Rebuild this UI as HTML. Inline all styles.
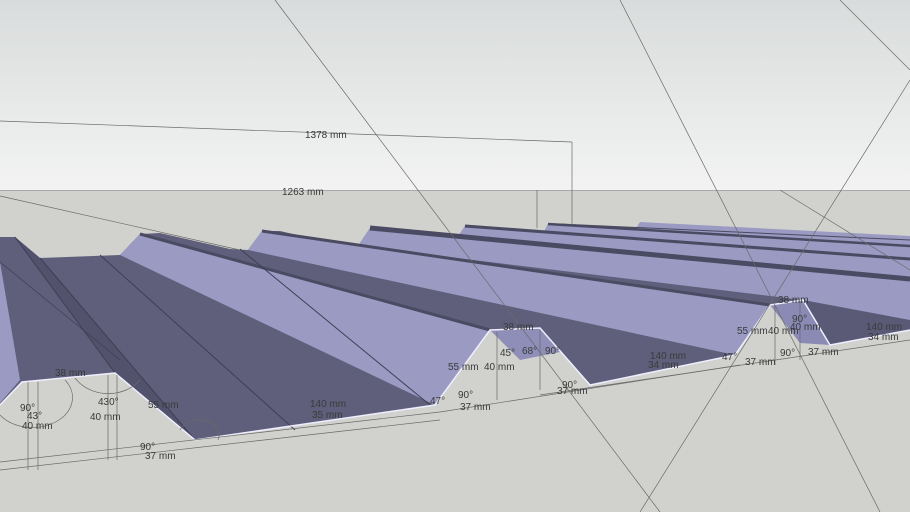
<!DOCTYPE html><html><head><style>html,body{margin:0;padding:0;width:910px;height:512px;overflow:hidden;background:#d0d0cc}svg{display:block}text{font-family:"Liberation Sans",sans-serif;font-size:10px;fill:#3a3a3a}</style></head><body>
<svg width="910" height="512" viewBox="0 0 910 512" xmlns="http://www.w3.org/2000/svg">
<defs><linearGradient id="sky" x1="0" y1="0" x2="0" y2="1"><stop offset="0" stop-color="#d9dcdc"/><stop offset="1" stop-color="#f3f3f3"/></linearGradient></defs>
<rect width="910" height="190" fill="url(#sky)"/>
<rect y="190" width="910" height="322" fill="#d1d1cd"/>
<line x1="0" y1="190.5" x2="910" y2="190.5" stroke="#a8a8a8" stroke-width="1"/>
<!-- base sheet (dark) -->
<polygon points="0,237 15,237 40,258 120,255 140,234 160,233 230,249 248,250 262,231 280,231 345,246 358,246 370,228 385,228 445,243 453,244 465,226 480,226 535,240 540,240 548,224 560,224 910,240 910,330 830,345 803,300 770,305 735,355 590,385 540,328 490,330 435,405 195,440 115,373 22,382 0,405" fill="#5f5f7b"/>
<!-- back ribs light faces -->
<polygon points="630,238 640,222 910,236 910,262" fill="#9a9ac3"/>
<polygon points="540,240 548,224 910,246 910,273" fill="#9a9ac3"/>
<line x1="548" y1="224" x2="910" y2="246" stroke="#4a4a62" stroke-width="2.5"/>
<polygon points="453,244 465,226 910,259 910,295" fill="#9a9ac3"/>
<line x1="465" y1="226" x2="910" y2="259" stroke="#4a4a62" stroke-width="3"/>
<polygon points="358,246 370,228 910,279 910,328 830,345 803,300" fill="#9a9ac3"/>
<line x1="370" y1="228" x2="910" y2="279" stroke="#4a4a62" stroke-width="5"/>
<polygon points="803,300 910,320 910,330 830,345" fill="#5a5a76"/>
<polygon points="248,250 262,231 770,305 735,355" fill="#9a9ac3"/>
<line x1="262" y1="231" x2="770" y2="305" stroke="#4a4a62" stroke-width="3"/>
<polygon points="770,305 803,300 830,345 800,343" fill="#8a8ab4"/>
<polygon points="120,255 140,234 490,330 435,405" fill="#9a9ac3"/>
<line x1="140" y1="234" x2="490" y2="330" stroke="#4a4a62" stroke-width="3"/>
<polygon points="490,330 540,328 560,352 520,360" fill="#8e8eb8"/>
<!-- rib A -->
<polygon points="0,262 20,380 0,403" fill="#9a9ac3"/>
<polygon points="15,237 40,258 195,440 115,373" fill="#52526c"/>
<line x1="15" y1="237" x2="115" y2="373" stroke="#3e3e55" stroke-width="1"/>
<line x1="40" y1="258" x2="195" y2="440" stroke="#3e3e55" stroke-width="1"/>
<line x1="100" y1="255" x2="295" y2="430" stroke="#3e3e55" stroke-width="1"/>
<line x1="240" y1="249" x2="430" y2="405" stroke="#3e3e55" stroke-width="1"/>
<line x1="0" y1="262" x2="120" y2="360" stroke="#3e3e55" stroke-width=".7"/>
<line x1="560" y1="224" x2="910" y2="240" stroke="#4a4a62" stroke-width="1"/>
<!-- front profile edges -->
<polyline points="0,405 22,382 115,373 195,440 435,405 490,330 540,328 590,385 735,355 770,305 803,300 830,345 910,330" fill="none" stroke="#eeeeff" stroke-width="1.5"/>
<!-- dimension lines -->
<g stroke="#6a6a6a" stroke-width=".7" fill="none">
<line x1="0" y1="121" x2="572" y2="142"/><line x1="572" y1="142" x2="572" y2="225"/>
<line x1="537" y1="190" x2="537" y2="228"/>
<line x1="0" y1="196" x2="240" y2="250"/>
<line x1="275" y1="0" x2="660" y2="512"/>
<line x1="620" y1="0" x2="880" y2="512"/>
<line x1="840" y1="0" x2="910" y2="70"/>
<line x1="910" y1="80" x2="640" y2="512"/>
<line x1="780" y1="190" x2="910" y2="270"/>
<line x1="0" y1="462" x2="440" y2="412"/><line x1="0" y1="470" x2="440" y2="420"/>
<line x1="440" y1="412" x2="740" y2="365"/>
<line x1="540" y1="395" x2="910" y2="340"/>
<line x1="28" y1="382" x2="28" y2="470"/><line x1="38" y1="382" x2="38" y2="470"/>
<line x1="108" y1="375" x2="108" y2="460"/><line x1="117" y1="375" x2="117" y2="460"/>
<line x1="497" y1="332" x2="497" y2="400"/><line x1="540" y1="330" x2="540" y2="390"/>
<line x1="775" y1="305" x2="775" y2="365"/><line x1="800" y1="302" x2="800" y2="360"/>
<path d="M0,415 A40,30 0 0 0 65,380"/><path d="M75,378 A40,35 0 0 0 140,380"/>
<path d="M180,430 A20,15 0 0 1 218,440"/>
</g>
<g fill="#3a3a3a">
<text x="305" y="138">1378 mm</text>
<text x="282" y="195">1263 mm</text>
<text x="55" y="376">38 mm</text>
<text x="20" y="411">90°</text><text x="27" y="419">43°</text><text x="22" y="429">40 mm</text>
<text x="98" y="405">430°</text><text x="90" y="420">40 mm</text>
<text x="148" y="408">55 mm</text>
<text x="140" y="450">90°</text><text x="145" y="459">37 mm</text>
<text x="310" y="407">140 mm</text><text x="312" y="418">35 mm</text>
<text x="430" y="404">47°</text>
<text x="503" y="330">38 mm</text>
<text x="448" y="370">55 mm</text><text x="484" y="370">40 mm</text>
<text x="500" y="356">45°</text><text x="522" y="354">68°</text><text x="545" y="354">90°</text>
<text x="458" y="398">90°</text><text x="460" y="410">37 mm</text>
<text x="650" y="359">140 mm</text><text x="648" y="368">34 mm</text>
<text x="562" y="388">90°</text><text x="557" y="394">37 mm</text>
<text x="722" y="360">47°</text><text x="745" y="365">37 mm</text>
<text x="778" y="303">38 mm</text>
<text x="737" y="334">55 mm</text><text x="768" y="334">40 mm</text>
<text x="790" y="330">40 mm</text><text x="792" y="322">90°</text>
<text x="780" y="356">90°</text><text x="808" y="355">37 mm</text>
<text x="866" y="330">140 mm</text><text x="868" y="340">34 mm</text>
</g>
</svg>
</body></html>
